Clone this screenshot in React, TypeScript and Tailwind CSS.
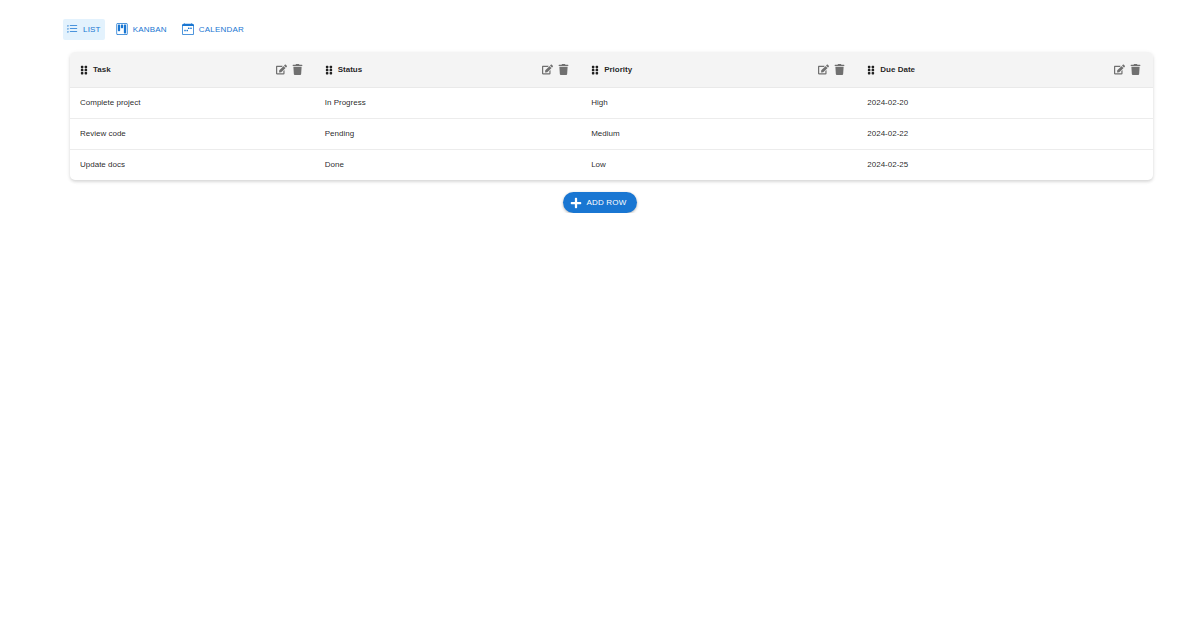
import { useState } from 'react';
import { BsCalendarWeek, BsKanban, BsListTask } from 'react-icons/bs';
import { FaEdit, FaGripVertical, FaPlus, FaTrash } from 'react-icons/fa';

const COLUMNS = [
  { id: 'task', label: 'Task', width: 'w-[22.6%]' },
  { id: 'status', label: 'Status', width: 'w-[24.6%]' },
  { id: 'priority', label: 'Priority', width: 'w-[25.5%]' },
  { id: 'due', label: 'Due Date', width: 'w-[27.3%]' },
];

const ROWS = [
  ['Complete project', 'In Progress', 'High', '2024-02-20'],
  ['Review code', 'Pending', 'Medium', '2024-02-22'],
  ['Update docs', 'Done', 'Low', '2024-02-25'],
];

const VIEWS = [
  { id: 'list', label: 'List', Icon: BsListTask },
  { id: 'kanban', label: 'Kanban', Icon: BsKanban },
  { id: 'calendar', label: 'Calendar', Icon: BsCalendarWeek },
];

/* ── View switcher ───────────────────────────────────────────────────────── */
function ViewSwitcher() {
  const [view, setView] = useState('list');

  return (
    <nav className="flex gap-2">
      {VIEWS.map(({ id, label, Icon }) => (
        <button
          key={id}
          type="button"
          onClick={() => setView(id)}
          className={`flex h-[21px] items-center gap-[5px] rounded-xs pr-1 pl-[3px] text-[8px] tracking-wide uppercase text-[#1976d2] ${
            view === id ? 'bg-[#e3f2fd]' : 'bg-transparent'
          }`}
        >
          <Icon className="mb-px size-3" />
          {label}
        </button>
      ))}
    </nav>
  );
}

/* ── Column header ───────────────────────────────────────────────────────── */
function ColumnHeader({ label }: { label: string }) {
  return (
    <div className="flex items-center">
      <FaGripVertical className="mr-[5px] h-2.5 w-2" />
      <span>{label}</span>
      <div className="ml-auto flex items-center gap-[5px] pr-0.5 text-black/54">
        <button type="button" aria-label={`Edit ${label}`}>
          <FaEdit className="size-[11px]" />
        </button>
        <button type="button" aria-label={`Delete ${label}`}>
          <FaTrash className="size-[11px]" />
        </button>
      </div>
    </div>
  );
}

export default function App() {
  return (
    <main className="px-[63px] pt-[19px] font-['Liberation_Sans',Arial,sans-serif] text-black/87">
      <ViewSwitcher />

      <div className="mt-3 -mr-4 ml-[7px] overflow-hidden rounded-[5px] bg-white shadow-[0_1px_4px_rgba(0,0,0,0.08),0_2px_3px_rgba(0,0,0,0.1)]">
        <table className="w-full table-fixed border-collapse text-left text-[8px]">
          <thead>
            <tr className="h-[35px] border-b border-[#e9e9e9] bg-[#f4f4f4]">
              {COLUMNS.map((column) => (
                <th key={column.id} className={`px-2.5 pt-px font-bold ${column.width}`}>
                  <ColumnHeader label={column.label} />
                </th>
              ))}
            </tr>
          </thead>
          <tbody>
            {ROWS.map((row) => (
              <tr key={row[0]} className="h-[31px] border-b border-[#ececec] last:border-b-0">
                {row.map((cell) => (
                  <td key={cell} className="px-2.5">
                    {cell}
                  </td>
                ))}
              </tr>
            ))}
          </tbody>
        </table>
      </div>

      <div className="mt-3 flex justify-center">
        <button
          type="button"
          className="flex h-[21px] items-center gap-1 rounded-full bg-[#1976d2] pr-2.5 pl-[7px] text-[8px] tracking-wide text-white uppercase shadow-[0_1px_3px_rgba(0,0,0,0.3)]"
        >
          <FaPlus className="size-3" />
          Add Row
        </button>
      </div>
    </main>
  );
}
